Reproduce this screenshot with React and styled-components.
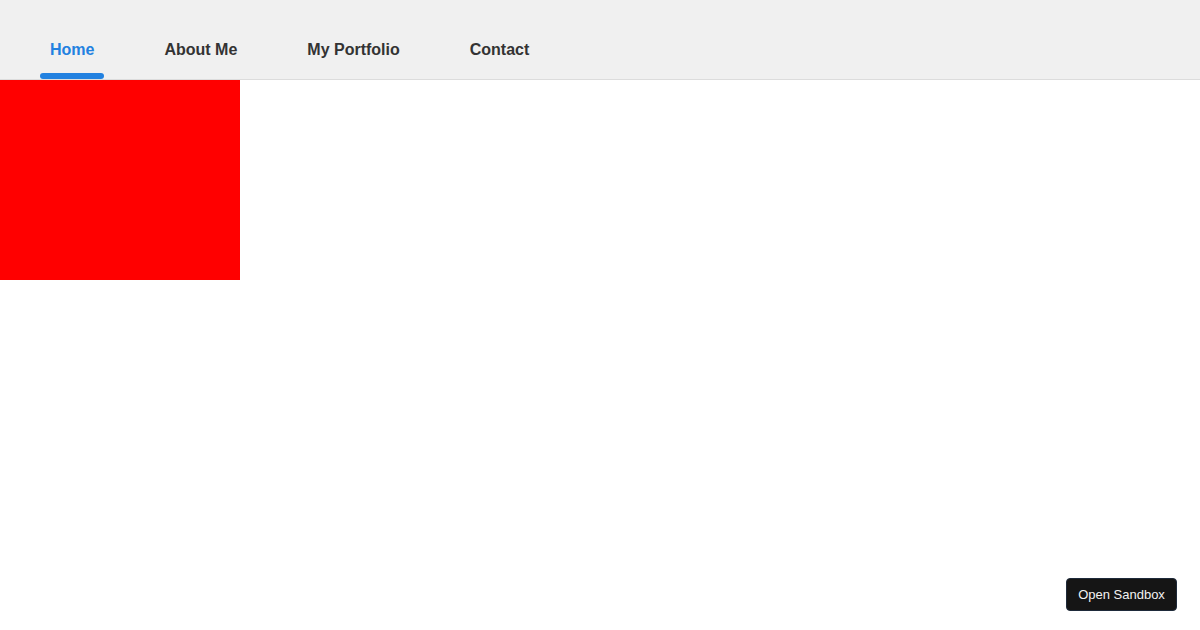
import styled, { createGlobalStyle } from "styled-components";

const GlobalStyle = createGlobalStyle`
  body {
    margin: 0;
    background: #fff;
    font-family: "Liberation Sans", Arial, sans-serif;
  }
`;

const tabs = ["Home", "About Me", "My Portfolio", "Contact"];

export default function App() {
  return (
    <>
      <GlobalStyle />
      <NavBar>
        {tabs.map((tab, i) => (
          <Tab key={tab} $active={i === 0}>
            {tab}
          </Tab>
        ))}
      </NavBar>
      <RedBox />
      <SandboxButton>Open Sandbox</SandboxButton>
    </>
  );
}

const NavBar = styled.nav`
  display: flex;
  gap: 50px;
  height: 79px;
  box-sizing: content-box;
  padding: 0 40px;
  background: #f0f0f0;
  border-bottom: 1px solid #dcdcdc;
`;

const Tab = styled.div`
  position: relative;
  display: flex;
  align-items: center;
  padding: 20px 10px 0;
  font-size: 16px;
  font-weight: 700;
  color: ${(p) => (p.$active ? "#2281e0" : "#333")};

  &::after {
    content: "";
    display: ${(p) => (p.$active ? "block" : "none")};
    position: absolute;
    left: 0;
    right: 0;
    bottom: 0;
    height: 6px;
    border-radius: 3px;
    background: #2281e0;
  }
`;

const RedBox = styled.div`
  width: 240px;
  height: 200px;
  background: red;
`;

const SandboxButton = styled.button`
  position: fixed;
  right: 23px;
  bottom: 19px;
  width: 111px;
  height: 33px;
  border: 1px solid #1e2a3a;
  border-radius: 4px;
  background: #151515;
  color: #f2f2f2;
  font-family: "Liberation Sans", Arial, sans-serif;
  font-size: 13px;
  cursor: pointer;
`;
